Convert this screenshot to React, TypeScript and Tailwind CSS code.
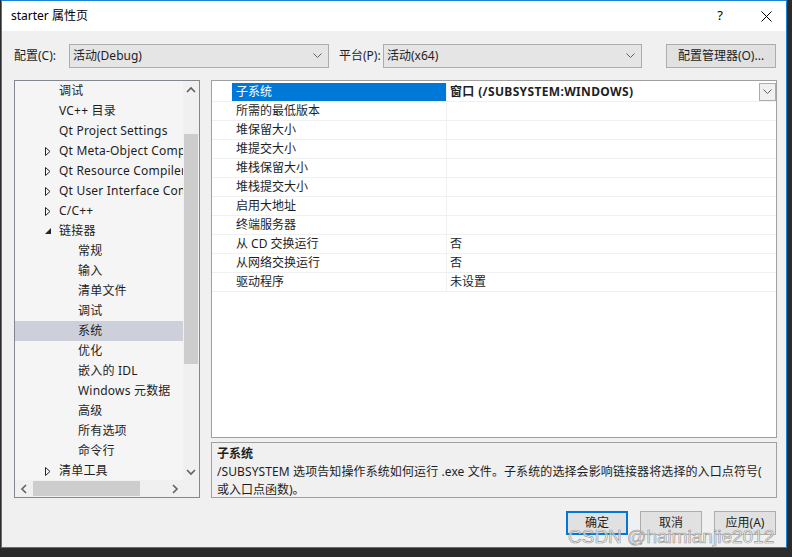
import React from 'react';

const font = { fontFamily: '"Noto Sans", "Noto Sans CJK SC", sans-serif' };

const Chevron = ({ className = '' }: { className?: string }) => (
  <svg width="9" height="6" viewBox="0 0 9 6" className={className}>
    <path d="M0.5 0.5 L4.5 4.5 L8.5 0.5" fill="none" stroke="#606060" strokeWidth="1" />
  </svg>
);

const ScrollArrow = ({ dir }: { dir: 'up' | 'down' | 'left' | 'right' }) => {
  const d = {
    up: 'M1 6 L5 2 L9 6',
    down: 'M1 2 L5 6 L9 2',
    left: 'M6 1 L2 5 L6 9',
    right: 'M2 1 L6 5 L2 9',
  }[dir];
  const vertical = dir === 'up' || dir === 'down';
  return (
    <svg width={vertical ? 10 : 8} height={vertical ? 8 : 10} viewBox={vertical ? '0 0 10 8' : '0 0 8 10'}>
      <path d={d} fill="none" stroke="#606060" strokeWidth="1.6" />
    </svg>
  );
};

type TreeItem = { label: string; level: 1 | 2; expander?: 'closed' | 'open'; selected?: boolean };

const treeItems: TreeItem[] = [
  { label: '调试', level: 1 },
  { label: 'VC++ 目录', level: 1 },
  { label: 'Qt Project Settings', level: 1 },
  { label: 'Qt Meta-Object Compiler', level: 1, expander: 'closed' },
  { label: 'Qt Resource Compiler', level: 1, expander: 'closed' },
  { label: 'Qt User Interface Compiler', level: 1, expander: 'closed' },
  { label: 'C/C++', level: 1, expander: 'closed' },
  { label: '链接器', level: 1, expander: 'open' },
  { label: '常规', level: 2 },
  { label: '输入', level: 2 },
  { label: '清单文件', level: 2 },
  { label: '调试', level: 2 },
  { label: '系统', level: 2, selected: true },
  { label: '优化', level: 2 },
  { label: '嵌入的 IDL', level: 2 },
  { label: 'Windows 元数据', level: 2 },
  { label: '高级', level: 2 },
  { label: '所有选项', level: 2 },
  { label: '命令行', level: 2 },
  { label: '清单工具', level: 1, expander: 'closed' },
];

const props: { name: string; value: string }[] = [
  { name: '子系统', value: '窗口 (/SUBSYSTEM:WINDOWS)' },
  { name: '所需的最低版本', value: '' },
  { name: '堆保留大小', value: '' },
  { name: '堆提交大小', value: '' },
  { name: '堆栈保留大小', value: '' },
  { name: '堆栈提交大小', value: '' },
  { name: '启用大地址', value: '' },
  { name: '终端服务器', value: '' },
  { name: '从 CD 交换运行', value: '否' },
  { name: '从网络交换运行', value: '否' },
  { name: '驱动程序', value: '未设置' },
];

const Expander = ({ kind }: { kind?: 'closed' | 'open' }) => {
  if (kind === 'closed')
    return (
      <svg width="6" height="9" viewBox="0 0 6 9">
        <path d="M0.5 0.5 L5 4.5 L0.5 8.5 Z" fill="none" stroke="#262626" strokeWidth="1" />
      </svg>
    );
  if (kind === 'open')
    return (
      <svg width="6" height="6" viewBox="0 0 6 6">
        <path d="M6 0 L6 6 L0 6 Z" fill="#262626" />
      </svg>
    );
  return null;
};

const Tree = () => (
  <div className="w-[186px] h-[418px] border border-[#828790] bg-[#f5f5f5] flex flex-col">
    <div className="flex flex-1 min-h-0">
      <div className="flex-1 overflow-hidden flex flex-col">
        {treeItems.map((item, i) => (
          <div
            key={i}
            className={`h-5 flex items-center shrink-0 whitespace-nowrap ${item.selected ? 'bg-[#cdcfdb]' : ''}`}
          >
            <div className={`flex items-center shrink-0 ${item.level === 1 ? 'w-[44px]' : 'w-[63px]'}`}>
              <div className="w-[8px] flex justify-center ml-[29px]">
                <Expander kind={item.expander} />
              </div>
            </div>
            <span className="text-[12px] text-[#1e1e1e] tracking-[0.2px]">{item.label}</span>
          </div>
        ))}
      </div>
      <div className="w-[16px] bg-[#f0f0f0] flex flex-col items-center">
        <div className="h-[17px] flex items-center justify-center">
          <ScrollArrow dir="up" />
        </div>
        <div className="flex-1 w-full flex flex-col px-px">
          <div className="h-[36px]" />
          <div className="h-[230px] bg-[#cdcdcd]" />
        </div>
        <div className="h-[17px] flex items-center justify-center">
          <ScrollArrow dir="down" />
        </div>
      </div>
    </div>
    <div className="h-[17px] flex shrink-0">
      <div className="flex-1 bg-[#f0f0f0] flex items-center">
        <div className="w-[17px] flex justify-center">
          <ScrollArrow dir="left" />
        </div>
        <div className="w-[107px] h-[15px] bg-[#cdcdcd] ml-px" />
        <div className="flex-1" />
        <div className="w-[17px] flex justify-center">
          <ScrollArrow dir="right" />
        </div>
      </div>
      <div className="w-[16px] bg-[#f0f0f0]" />
    </div>
  </div>
);

const PropertyGrid = () => (
  <div className="h-[358px] border border-[#a0a0a0] bg-white pt-[2px]">
    {props.map((p, i) => (
      <div key={i} className="h-[19px] flex border-b border-[#f0f0f0]">
        <div className="w-[20px] shrink-0" />
        <div
          className={`w-[215px] shrink-0 flex items-center pl-[4px] text-[12px] border-r border-[#f0f0f0] ${
            i === 0 ? 'bg-[#0078d7] text-white' : 'text-[#1e1e1e]'
          }`}
        >
          {p.name}
        </div>
        <div className="flex-1 flex items-center pl-[3px] text-[12px] text-[#1e1e1e]">
          <span className={i === 0 ? 'font-bold tracking-[0.35px]' : ''}>{p.value}</span>
        </div>
        {i === 0 && (
          <div className="w-[17px] h-[18px] bg-[#f0f0f0] border border-[#acacac] flex items-center justify-center">
            <Chevron />
          </div>
        )}
      </div>
    ))}
  </div>
);

const Button = ({ children, primary }: { children: React.ReactNode; primary?: boolean }) => (
  <div
    className={`w-[62px] h-[24px] flex items-center justify-center text-[12px] text-[#1e1e1e] bg-[#e1e1e1] ${
      primary ? 'border-2 border-[#0078d7]' : 'border border-[#adadad]'
    }`}
  >
    {children}
  </div>
);

export default function App() {
  return (
    <div className="w-[792px] h-[557px] bg-[#2b2b2b] overflow-hidden" style={font}>
      <div className="ml-px w-[786px] h-[548px] border border-[#1883d7] bg-[#f0f0f0] flex flex-col relative">
        <div className="h-[30px] bg-white flex items-center shrink-0">
          <span className="ml-[9px] text-[12px] text-black">starter 属性页</span>
          <div className="flex-1" />
          <span className="text-[13px] text-black mr-[38px]">?</span>
          <svg width="11" height="11" viewBox="0 0 11 11" className="mr-[14px]">
            <path d="M0.5 0.5 L10.5 10.5 M10.5 0.5 L0.5 10.5" stroke="#000" strokeWidth="1" />
          </svg>
        </div>

        <div className="flex items-center pl-[12px] pr-[10px] pt-[12px] h-[37px] shrink-0">
          <span className="w-[55px] text-[12px] text-[#1e1e1e]">配置(C):</span>
          <div className="w-[260px] h-[24px] bg-[#e5e5e5] border border-[#acacac] flex items-center pl-[3px] pr-[6px]">
            <span className="flex-1 text-[12px] text-[#1e1e1e]">活动(Debug)</span>
            <Chevron />
          </div>
          <span className="w-[54px] pl-[10px] text-[12px] text-[#1e1e1e]">平台(P):</span>
          <div className="w-[259px] h-[24px] bg-[#e5e5e5] border border-[#acacac] flex items-center pl-[3px] pr-[6px]">
            <span className="flex-1 text-[12px] text-[#1e1e1e]">活动(x64)</span>
            <Chevron />
          </div>
          <div className="flex-1" />
          <div className="w-[110px] h-[24px] bg-[#e1e1e1] border border-[#adadad] flex items-center justify-center text-[12px] text-[#1e1e1e]">
            配置管理器(O)...
          </div>
        </div>

        <div className="flex pl-[12px] pr-[9px] pt-[12px] gap-[11px]">
          <Tree />
          <div className="flex-1 flex flex-col gap-[4px]">
            <PropertyGrid />
            <div className="h-[56px] border border-[#a0a0a0] bg-[#f0f0f0] px-[5px] pt-[2px] text-[12px] text-[#1e1e1e] leading-[18px]">
              <div className="font-bold">子系统</div>
              <div className="whitespace-nowrap tracking-[0.1px]">
                /SUBSYSTEM 选项告知操作系统如何运行 .exe 文件。子系统的选择会影响链接器将选择的入口点符号(
              </div>
              <div>或入口点函数)。</div>
            </div>
          </div>
        </div>

        <div className="flex justify-end gap-[12px] pr-[10px] pt-[13px]">
          <Button primary>确定</Button>
          <Button>取消</Button>
          <Button>应用(A)</Button>
        </div>

        <div
          className="absolute left-[566px] top-[524px] text-[19px] leading-[24px] text-white/70 [-webkit-text-stroke:0.7px_#9a9a9a] whitespace-nowrap"
          style={{ fontFamily: '"Liberation Sans", Arial, sans-serif' }}
        >
          CSDN @haimianjie2012
        </div>
      </div>
    </div>
  );
}
